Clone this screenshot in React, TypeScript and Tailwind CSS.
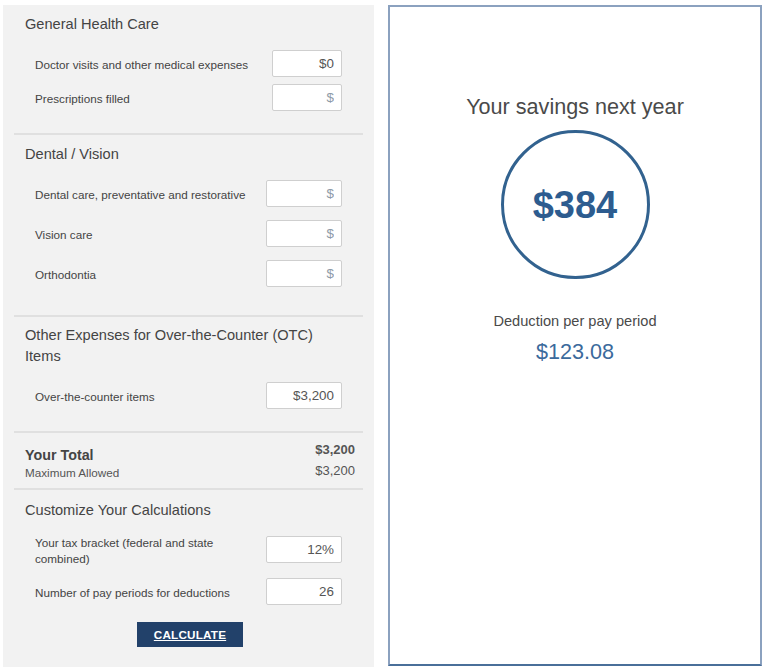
import React from 'react';

const font = { fontFamily: '"Liberation Sans", Arial, sans-serif' };

function Divider() {
  return <div className="h-[2px] bg-[#e0e0e0]" />;
}

function MoneyInput({ value, placeholder, width = 'w-[76px]' }: { value?: string; placeholder?: string; width?: string }) {
  return (
    <input
      readOnly
      value={value ?? ''}
      placeholder={placeholder}
      className={`${width} h-[27px] shrink-0 rounded-[2px] border border-[#cfcfcf] bg-white pr-[7px] text-right text-[13.4px] text-[#555] placeholder:text-[#8e9aa8] outline-none`}
      style={font}
    />
  );
}

function Row({ label, children }: { label: string; children: React.ReactNode }) {
  return (
    <div className="flex items-center gap-3 pl-[21px] pr-[21px]">
      <span className="flex-1 pt-[2px] text-[11.7px] leading-[16px] text-[#444]">{label}</span>
      {children}
    </div>
  );
}

function Heading({ children }: { children: React.ReactNode }) {
  return <h3 className="px-[11px] text-[14.6px] leading-[20px] text-[#444]">{children}</h3>;
}

export default function App() {
  return (
    <div className="flex h-[667px] items-start gap-[14px] overflow-hidden bg-white pl-[3px] pt-[5px]" style={font}>
      <div className="h-[670px] w-[371px] shrink-0 bg-[#f2f2f2] px-[11px]">
        {/* General health care */}
        <div className="pt-[9px] pb-[22px]">
          <Heading>General Health Care</Heading>
          <div className="mt-[16px] flex flex-col gap-[7px]">
            <Row label="Doctor visits and other medical expenses">
              <MoneyInput value="$0" width="w-[70px]" />
            </Row>
            <Row label="Prescriptions filled">
              <MoneyInput placeholder="$" width="w-[70px]" />
            </Row>
          </div>
        </div>
        <Divider />

        {/* Dental / vision */}
        <div className="pt-[9px] pb-[28px]">
          <Heading>Dental / Vision</Heading>
          <div className="mt-[16px] flex flex-col gap-[13px]">
            <Row label="Dental care, preventative and restorative">
              <MoneyInput placeholder="$" />
            </Row>
            <Row label="Vision care">
              <MoneyInput placeholder="$" />
            </Row>
            <Row label="Orthodontia">
              <MoneyInput placeholder="$" />
            </Row>
          </div>
        </div>
        <Divider />

        {/* OTC */}
        <div className="pt-[8px] pb-[22px]">
          <h3 className="px-[11px] pr-[40px] text-[14.6px] leading-[21px] text-[#444]">
            Other Expenses for Over-the-Counter (OTC) Items
          </h3>
          <div className="mt-[15px]">
            <Row label="Over-the-counter items">
              <MoneyInput value="$3,200" />
            </Row>
          </div>
        </div>
        <Divider />

        {/* Totals */}
        <div className="flex items-start justify-between pl-[11px] pr-[8px]">
          <div className="flex flex-col pt-[13px] pb-[6px]">
            <span className="text-[14.3px] font-bold leading-[18px] text-[#444]">Your Total</span>
            <span className="text-[11.7px] leading-[18px] text-[#555]">Maximum Allowed</span>
          </div>
          <div className="flex flex-col items-end pt-[7px]">
            <span className="text-[13px] font-bold leading-[20px] text-[#555]">$3,200</span>
            <span className="mt-[1px] text-[13px] leading-[20px] text-[#555]">$3,200</span>
          </div>
        </div>
        <Divider />

        {/* Customize */}
        <div className="pt-[10px]">
          <Heading>Customize Your Calculations</Heading>
          <div className="mt-[16px] flex flex-col">
            <div className="flex h-[27px] items-start gap-3 pl-[21px] pr-[21px]">
              <span className="-mt-[1px] w-[190px] text-[11.7px] leading-[16px] text-[#444]">
                Your tax bracket (federal and state combined)
              </span>
              <div className="flex-1" />
              <MoneyInput value="12%" />
            </div>
            <div className="mt-[15px]">
              <Row label="Number of pay periods for deductions">
                <MoneyInput value="26" />
              </Row>
            </div>
          </div>
          <div className="mt-[17px] flex justify-center pl-[3px]">
            <button
              className="h-[25px] w-[106px] bg-[#22416a] text-[11.7px] font-bold tracking-[0.2px] text-white underline"
              style={font}
            >
              CALCULATE
            </button>
          </div>
        </div>
      </div>

      {/* Results */}
      <div className="flex h-[661px] w-[374px] shrink-0 flex-col items-center border-2 border-[#8ba1bf] border-b-[#4a6f99] bg-white pt-[87px]">
        <h2 className="text-[21.6px] leading-[26px] text-[#4a4a4a]">Your savings next year</h2>
        <div className="mt-[10px] flex h-[149px] w-[149px] items-center justify-center rounded-full border-[3px] border-[#32628f]">
          <span className="text-[38px] font-bold leading-none text-[#2d5c8f]">$384</span>
        </div>
        <p className="mt-[32px] text-[14.6px] leading-[20px] text-[#4a4a4a]">Deduction per pay period</p>
        <p className="mt-[8px] text-[21.6px] leading-[26px] text-[#3b6a9c]">$123.08</p>
      </div>
    </div>
  );
}
